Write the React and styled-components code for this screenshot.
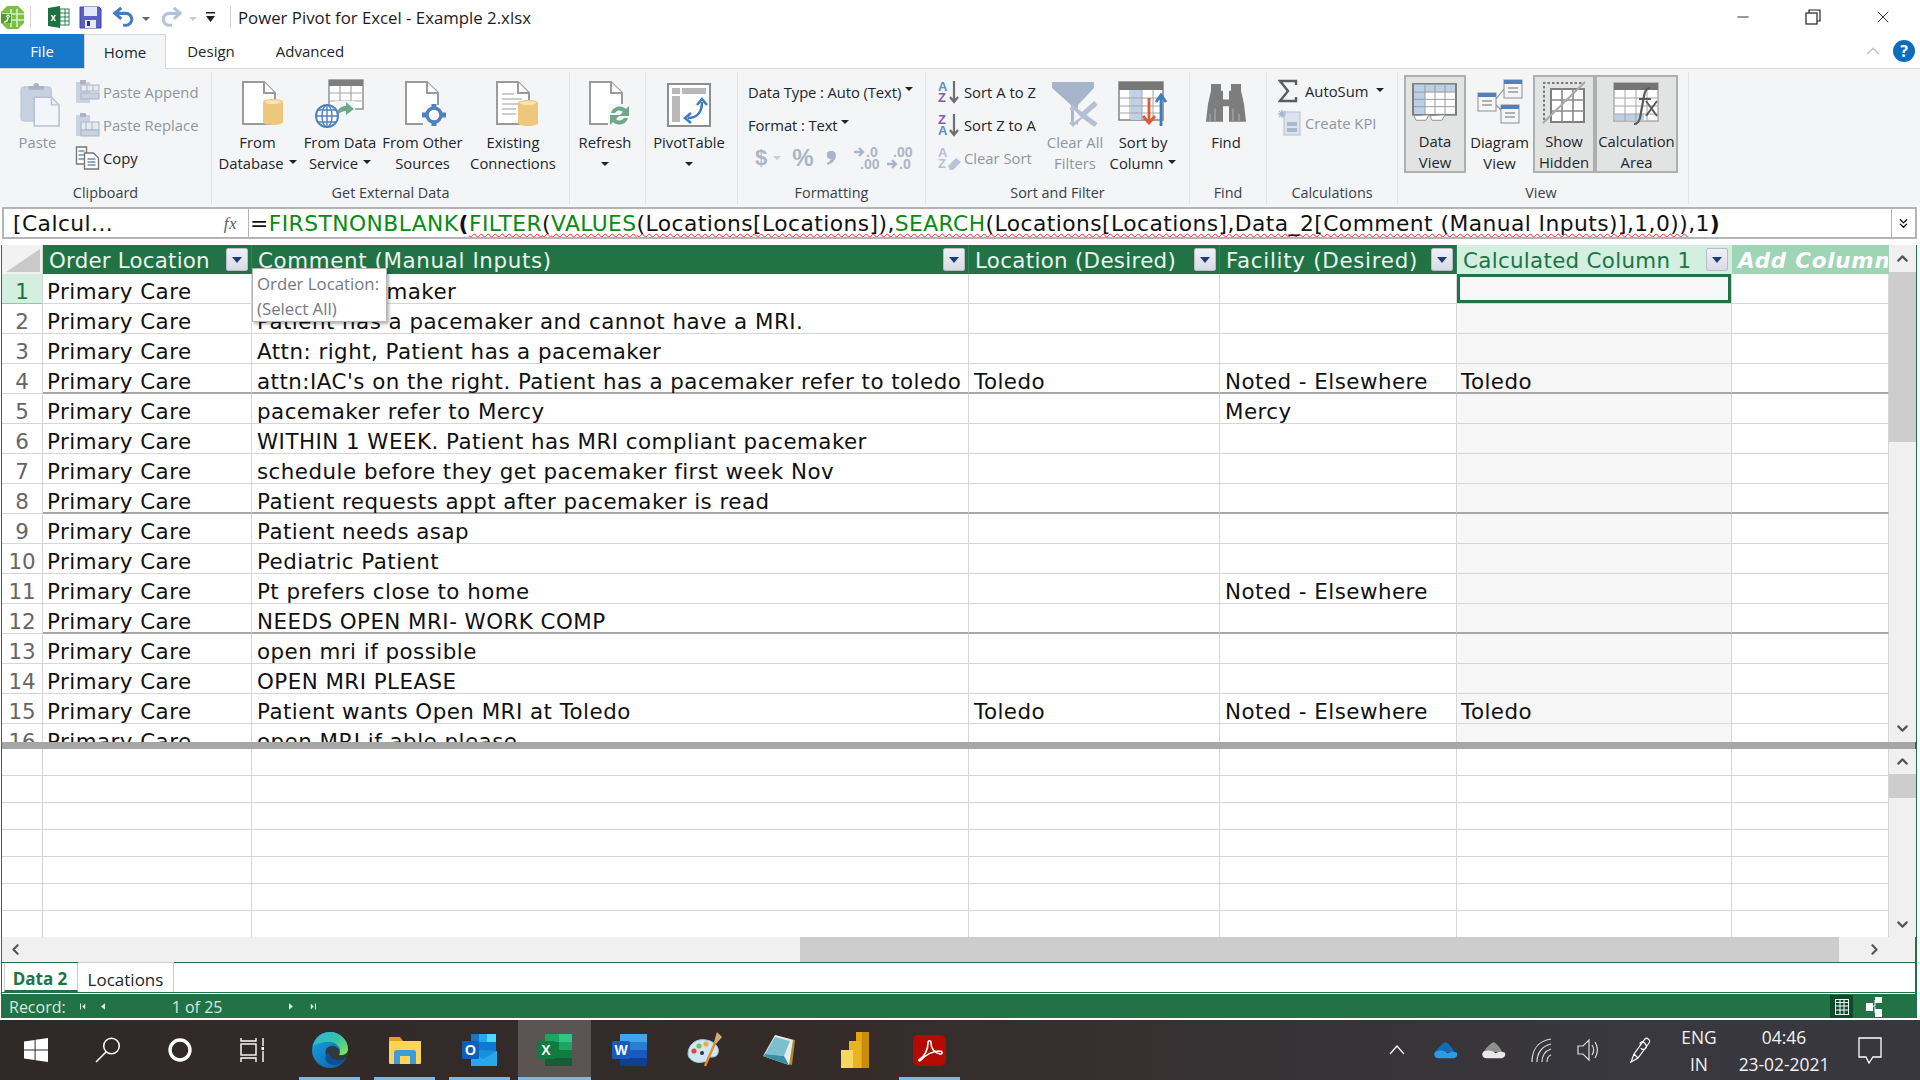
import React from 'react';
import styled, { createGlobalStyle } from 'styled-components';
import { ChevronUp, ChevronDown, ChevronLeft, ChevronRight, ChevronsDown, Minus, X } from 'lucide-react';

const UI = `"Open Sans", "Noto Sans", sans-serif`;
const GRIDFONT = `"DejaVu Sans", sans-serif`;
const GREEN = '#217346';
const COLS = '41px 209px 717px 251px 237px 275px 157px';

const Global = createGlobalStyle`
  html, body { margin: 0; padding: 0; background: #fff; overflow: hidden; }
  * { box-sizing: border-box; }
`;

const Screen = styled.div`
  width: 1920px; height: 1080px; display: flex; flex-direction: column; overflow: hidden;
  background: #fff; font-family: ${UI}; color: #22262c;
`;

/* title bar */
const TitleBar = styled.div`height: 34px; display: flex; align-items: center; position: relative;`;
const QatItem = styled.span`display: inline-flex; align-items: center; margin-left: ${p => p.$ml || 0}px; ${p => p.$flip && 'transform: scaleX(-1);'}`;
const QatSep = styled.span`width: 1px; height: 22px; background: #d5d5d5; margin-left: ${p => p.$ml}px;`;
const Title = styled.span`font-size: 16.8px; margin-left: 7px; white-space: nowrap; color: #1c1c1c;`;
const WinControls = styled.div`margin-left: auto; display: flex; align-items: center; height: 100%;`;
const WinBtn = styled.span`width: ${p => p.$w}px; display: flex; justify-content: center; color: #222;`;

/* tabs */
const TabBar = styled.div`height: 35px; display: flex; align-items: stretch; border-bottom: 1px solid #d6d6d6; background: #fff;`;
const FileTab = styled.div`width: 84px; background: #1878ca; color: #fff; font-size: 15px; display: flex; align-items: center; justify-content: center;`;
const Tab = styled.div`
  width: ${p => p.$w}px; font-size: 15px; display: flex; align-items: center; justify-content: center;
  ${p => p.$active && `background:#f4f5f7; border:1px solid #d6d6d6; border-bottom:none; margin-bottom:-1px;`}
`;
const TabRight = styled.div`margin-left: auto; display: flex; align-items: center; gap: 9px; padding-right: 5px; color: #c4c4c4;`;
const HelpDot = styled.span`
  width: 22px; height: 22px; border-radius: 50%; background: #0f6cbd; color: #fff; font-size: 16px; font-weight: 700;
  display: flex; align-items: center; justify-content: center;
`;

/* ribbon */
const Ribbon = styled.div`height: 138px; background: #f4f5f7; display: flex; align-items: flex-start; padding-top: 3px;`;
const Group = styled.div`
  width: ${p => p.$w}px; height: 132px; border-right: 1px solid #e0e2e5; display: flex; flex-direction: column; flex: none;
`;
const GroupBody = styled.div`flex: 1; min-height: 0; display: flex; padding-left: ${p => p.$pl || 0}px;`;
const GroupLabel = styled.div`height: 24px; text-align: center; font-size: 14.4px; line-height: 26px; color: #3a4048; padding-right: ${p => p.$pr || 0}px;`;
const Large = styled.div`
  width: ${p => p.$w}px; flex: none; display: flex; flex-direction: column; align-items: center; text-align: center;
  height: ${p => p.$boxed ? 98 : 104}px; margin-top: ${p => p.$boxed ? 3 : 0}px;
  color: ${p => p.$off ? '#8d95a0' : '#22262c'};
  ${p => p.$boxed && `background:#e2e3e3; border:2px solid #aeafaf;`}
`;
const LargeIcon = styled.div`
  height: ${p => p.$h || 60}px; width: 100%; display: flex; align-items: flex-end; justify-content: center; flex: none;
  padding-bottom: ${p => p.$pb ?? 5}px; padding-left: ${p => p.$dx || 0}px;
`;
const LargeLine = styled.span`display: block; font-size: 14.8px; line-height: 21px; white-space: nowrap;`;
const Caret = styled.span`
  display: inline-block; width: 0; height: 0; border-left: 4px solid transparent; border-right: 4px solid transparent;
  border-top: 4px solid ${p => p.$c || '#222'}; vertical-align: middle; margin-left: ${p => p.$ml ?? 5}px; position: relative; top: ${p => p.$t ?? -3}px;
`;
const SmallCol = styled.div`width: ${p => p.$w}px; flex: none; padding-top: 3px; display: flex; flex-direction: column;`;
const Small = styled.div`
  height: ${p => p.$h || 33}px; display: flex; align-items: center; gap: ${p => p.$gap ?? 3}px; font-size: 14.8px; white-space: nowrap;
  letter-spacing: ${p => p.$ls || 0}px;
  color: ${p => p.$off ? '#8d95a0' : '#22262c'};
`;
const NumGlyph = styled.span`
  font-family: "Liberation Sans", sans-serif; font-weight: 700; color: #a9b6c8; font-size: ${p => p.$s}px; line-height: 1;
  margin-left: ${p => p.$ml || 0}px;
`;
const CommaIcon = styled.svg`margin-left: ${p => p.$ml}px; flex: none;`;
const DecimalIcon = styled.svg`margin-left: ${p => p.$ml}px; flex: none; font-family: "Liberation Sans", sans-serif; font-weight: 700; font-size: 14px; fill: #a9b6c8;`;

/* formula */
const FormulaBar = styled.div`
  height: 32px; margin: 0 3px 6px 2px; background: #fff; display: flex; border: 2px solid #b4b4b4;
  font-family: ${GRIDFONT}; font-size: 21.8px; line-height: 30px; letter-spacing: 0.44px; color: #111; flex: none;
`;
const NameBox = styled.div`width: 245px; flex: none; padding: 1px 0 0 9px; display: flex; justify-content: space-between; align-items: center; border-right: 1px solid #b4b4b4; white-space: nowrap;`;
const Fx = styled.span`font-family: "Liberation Serif", serif; font-style: italic; color: #5d5d5d; font-size: 17px; margin-right: 11px;`;
const FormulaText = styled.div`flex: 1; padding-left: 1px; white-space: nowrap; overflow: hidden;`;
const Fn = styled.span`color: #0a8a12;`;
const Paren = styled.span`font-weight: 700;`;
const Wavy = styled.span`text-decoration: underline wavy #e0302a 1px; text-underline-offset: 2px; text-decoration-skip-ink: none;`;
const FormulaEnd = styled.div`width: 24px; flex: none; border-left: 1px solid #b4b4b4; display: flex; align-items: center; justify-content: center;`;

/* workspace */
const Workspace = styled.div`
  flex: 1; min-height: 0; margin: 0 3px 2px 1px; border-left: 1px solid ${GREEN}; border-right: 2px solid ${GREEN};
  display: flex; flex-direction: column;
`;
const Pane = styled.div`height: ${p => p.$h}px; display: flex; flex: none; position: relative;`;
const GridArea = styled.div`width: 1887px; flex: none; overflow: hidden; font-family: ${GRIDFONT}; font-size: 21.4px; color: #111;`;
const Row = styled.div`
  display: grid; grid-template-columns: ${COLS}; grid-template-rows: ${p => p.$h}px; height: ${p => p.$h}px; line-height: 35px;
`;
const Corner = styled.div`background: #f2f2f2; border-right: 1px solid #d6d6d6; display: flex; align-items: flex-end; justify-content: flex-end; padding: 0 2px 2px 0;`;
const Head = styled.div`
  display: flex; align-items: center; justify-content: space-between; padding: 3px 3px 0 6px; white-space: nowrap; overflow: hidden; line-height: 26px;
  background: ${p => p.$bg || GREEN}; color: ${p => p.$c || '#eaf5ef'}; border-right: 1px solid ${p => p.$line || '#2f8457'};
  letter-spacing: ${p => p.$ls ?? 0.3}px;
  ${p => p.$add && `font-weight:700;font-style:italic;padding-right:0;letter-spacing:0.8px;`}
`;
const FilterBtn = styled.span`
  width: 22px; height: 23px; flex: none; border: 1px solid #b8bdc9; border-radius: 2px; background: linear-gradient(#eff1f6, #d8dbe5); margin-top: -3px;
  display: flex; align-items: center; justify-content: center;
  &::after { content: ""; border-left: 5px solid transparent; border-right: 5px solid transparent; border-top: 6px solid #1f3b7a; }
`;
const RowNum = styled.div`
  text-align: center; color: ${p => p.$sel ? GREEN : '#666'}; border-right: 1px solid #d6d6d6;
  background: ${p => p.$sel ? '#d3efe0' : '#fff'}; border-bottom: 1px solid ${p => p.$sel ? '#7fcfa4' : '#d6d6d6'};
`;
const Cell = styled.div`
  padding-left: ${p => p.$pl ?? 5}px; white-space: nowrap; border-right: 1px solid #d6d6d6; letter-spacing: 0.47px;
  border-bottom: ${p => p.$edge ? '2px solid #a8a8a8' : '1px solid #d6d6d6'};
  background: ${p => p.$calc ? '#f7f7f7' : '#fff'};
  ${p => p.$selected && `box-shadow: inset 0 0 0 3px ${GREEN}; background:#f8f8f8;`}
`;
const VScroll = styled.div`width: 27px; flex: none; background: #f0f0f0; display: flex; flex-direction: column; align-items: stretch; color: #555;`;
const Arrow = styled.div`height: ${p => p.$h}px; display: flex; align-items: center; justify-content: center; ${p => p.$end && 'margin-top:auto;'}`;
const Thumb = styled.div`height: ${p => p.$h}px; background: #cdcdcd; flex: none;`;
const Tooltip = styled.div`
  position: absolute; left: 250px; top: 23px; width: 135px; height: 54px; background: #fff; border: 1px solid #b5b5b5;
  box-shadow: 2px 2px 3px rgba(0,0,0,.3); color: #76797f; font-family: ${UI}; font-size: 16.8px; line-height: 25px; padding: 2px 0 0 4px; white-space: nowrap;
`;
const Splitter = styled.div`height: 7px; background: #a6a6a6; flex: none;`;
const HScroll = styled.div`height: 25px; background: #f0f0f0; display: flex; align-items: center; flex: none; color: #555; `;
const HArrow = styled.span`width: ${p => p.$w}px; flex: none; display: flex; justify-content: center;`;
const HThumb = styled.div`width: 1039px; height: 100%; background: #cdcdcd; flex: none; margin-left: ${p => p.$ml}px;`;
const SheetTabs = styled.div`
  height: 31px; flex: none; display: flex; border-top: 1px solid ${GREEN}; border-bottom: 1px solid ${GREEN}; padding-left: 2px; font-size: 17px; margin-bottom: 1px;
`;
const SheetTab = styled.div`
  width: ${p => p.$w}px; display: flex; align-items: center; justify-content: center; background: #fff; padding-top: 4px;
  ${p => p.$active ? `color:${GREEN};font-weight:700;border-bottom:2px solid ${GREEN};border-left:1px solid #cfcfcf;border-right:1px solid #cfcfcf;padding-right:2px;` : `border-right:1px solid #cfcfcf;margin-top:-1px;border-top:1px solid #cfcfcf;`}
`;
const StatusBar = styled.div`height: 24px; flex: none; background: ${GREEN}; color: #d8e8df; font-size: 16px; display: flex; align-items: center; padding: 1px 0 0 7px; white-space: nowrap;`;
const StatusIcons = styled.div`margin-left: auto; display: flex; align-items: center; height: 100%; padding-right: 19px;`;
const StatusView = styled.span`
  width: ${p => p.$w}px; height: 100%; display: flex; align-items: center; justify-content: center;
  ${p => p.$on && 'background:#0e4a29;'}
`;
const NavGlyph = styled.span`display: inline-flex; margin-left: ${p => p.$ml}px; opacity: .85;`;
const RecordText = styled.span`margin-left: ${p => p.$ml}px;`;

/* taskbar */
const Taskbar = styled.div`
  height: 60px; flex: none; background: linear-gradient(90deg, #2f2927 0%, #352c2a 45%, #38383e 85%, #37373d 100%); display: flex; align-items: center; color: #fff;
`;
const SysSlot = styled.span`width: 72px; height: 60px; flex: none; display: flex; align-items: center; justify-content: center;`;
const Apps = styled.div`display: flex; gap: 14px; margin-left: 11px; height: 100%;`;
const AppCell = styled.span`
  width: ${p => p.$active ? 73 : 61}px; height: 60px; display: flex; align-items: center; justify-content: center; position: relative;
  ${p => p.$active && 'margin: 0 -6px; background:#5a5452;'}
  ${p => p.$open && `&::after { content:""; position:absolute; left:0; right:0; bottom:0; height:3px; background:#76b9ed; }`}
`;
const Tray = styled.div`margin-left: auto; display: flex; align-items: center; height: 100%;`;
const TrayIcon = styled.span`width: ${p => p.$w}px; display: flex; justify-content: center; flex: none;`;
const TrayText = styled.div`
  width: ${p => p.$w}px; text-align: center; flex: none; font-size: 17.4px; line-height: 27px; padding-top: 2px; color: #f2f2f2; white-space: nowrap;
`;

/* ---- icons ---- */
const Page = ({ lines }) => (
  <>
    <path d="M1 1H22L33 12V43H1Z" fill="#fff" stroke="#9a9a9a" strokeWidth="2" />
    <path d="M22 1V12H33" fill="#fff" stroke="#9a9a9a" strokeWidth="2" />
    {lines && <path d="M6 13H18M6 18H26M6 23H26M6 28H20M6 33H20" stroke="#bdbdbd" strokeWidth="1.6" />}
  </>
);
const Cyl = ({ x, y }) => (
  <g transform={`translate(${x} ${y})`}>
    <path d="M0 4C0 0 20 0 20 4V24C20 28 0 28 0 24Z" fill="#edc77c" />
    <ellipse cx="10" cy="4" rx="8" ry="2" fill="#f7e3b7" />
  </g>
);
const IcoFromDb = () => <svg width="42" height="46" viewBox="0 0 42 46"><Page /><Cyl x={21} y={17} /></svg>;
const IcoService = () => (
  <svg width="50" height="50" viewBox="0 0 50 50">
    <rect x="14" y="1" width="34" height="29" fill="#fff" stroke="#8c8c8c" strokeWidth="1.4" />
    <rect x="14" y="1" width="34" height="6" fill="#7e7e7e" />
    <path d="M25 7V30M36 7V30M14 14H48M14 22H48" stroke="#a8a8a8" strokeWidth="1.2" />
    <rect x="20" y="22" width="20" height="16" fill="#f4f5f7" />
    <path d="M23 36c0-7 5-9 9-9v-4l8 7-8 6v-4c-3 0-6 1-9 4z" fill="#6fa789" transform="translate(-1 0)" />
    <circle cx="12" cy="37" r="11" fill="#fff" stroke="#4f81bd" strokeWidth="2" />
    <ellipse cx="12" cy="37" rx="5" ry="11" fill="none" stroke="#4f81bd" strokeWidth="1.4" />
    <path d="M1 37H23M3 31H21M3 43H21M12 26V48" stroke="#4f81bd" strokeWidth="1.4" />
  </svg>
);
const IcoOther = () => (
  <svg width="44" height="46" viewBox="0 0 44 46">
    <Page />
    <rect x="18" y="24" width="26" height="22" fill="#f4f5f7" />
    <path d="M18 34H42M30 23V45" stroke="#4f81bd" strokeWidth="5" transform="translate(-1 0)" />
    <circle cx="29" cy="34" r="7" fill="#fff" stroke="#4f81bd" strokeWidth="3.5" />
  </svg>
);
const IcoExisting = () => <svg width="42" height="46" viewBox="0 0 42 46"><Page lines /><Cyl x={22} y={18} /></svg>;
const IcoRefresh = () => (
  <svg width="42" height="46" viewBox="0 0 42 46">
    <Page />
    <rect x="19" y="23" width="23" height="23" fill="#f4f5f7" />
    <path d="M22 32a9 9 0 0 1 15-4l3-3v10H30l4-4a5 5 0 0 0-8 1zM39 37a9 9 0 0 1-15 4l-3 3V34h10l-4 4a5 5 0 0 0 8-1z" fill="#6fa789" />
  </svg>
);
const IcoPivot = () => (
  <svg width="44" height="44" viewBox="0 0 44 44">
    <rect x="1" y="1" width="42" height="42" fill="#fff" stroke="#8f8f8f" strokeWidth="2" />
    <rect x="5" y="5" width="8" height="6" fill="#b9b9b9" /><rect x="15" y="5" width="24" height="6" fill="#b9b9b9" />
    <rect x="5" y="13" width="8" height="26" fill="#b9b9b9" />
    <path d="M21 35c9 0 14-6 14-16" fill="none" stroke="#3f7cbf" strokeWidth="2.6" />
    <path d="M30 22l5-6 5 6M24 30l-6 5 6 5" fill="none" stroke="#3f7cbf" strokeWidth="2.6" />
  </svg>
);
const IcoPaste = () => (
  <svg width="40" height="46" viewBox="0 0 42 48">
    <rect x="1" y="6" width="32" height="36" rx="3" fill="#c5d0e0" stroke="#b9c4d4" />
    <path d="M9 9V5h5a3 3 0 0 1 6 0h5v4z" fill="#a8b2c2" />
    <path d="M15 17H33L41 25V47H15Z" fill="#f2f5fa" stroke="#b6c2d6" strokeWidth="1.6" />
    <path d="M33 17V25H41" fill="none" stroke="#b6c2d6" strokeWidth="1.4" />
  </svg>
);
const IcoPasteSmall = ({ v }) => (
  <svg width="25" height="24" viewBox="0 0 25 24">
    <rect x="1" y="2" width="14" height="21" fill="#c8d2e1" />
    <rect x="5" y="0" width="6" height="4" fill="#aab4c4" />
    <rect x="6" y={v ? 9 : 5} width="18" height={v ? 8 : 6} fill="#e6eaf1" stroke="#aab4c4" />
    <path d={v ? 'M11 9v8M17 9v8' : 'M12 5v6M18 5v6'} stroke="#aab4c4" />
    <rect x="6" y={v ? 17 : 13} width="18" height="6" fill="#c8d2e1" stroke="#aab4c4" />
  </svg>
);
const IcoCopy = () => (
  <svg width="25" height="24" viewBox="0 0 24 24">
    <path d="M1 1H11V18H1Z" fill="#fff" stroke="#777" strokeWidth="1.4" />
    <path d="M3 5H9M3 9H9M3 13H9" stroke="#6d8fb8" strokeWidth="1.4" />
    <path d="M9 7H18L23 12V23H9Z" fill="#fff" stroke="#777" strokeWidth="1.4" />
    <path d="M12 13H20M12 16H20M12 19H20" stroke="#6d8fb8" strokeWidth="1.4" />
  </svg>
);
const LetterIcon = ({ top, bottom, topC, botC, arrow = '#6f6f6f', erase }) => (
  <svg width="23" height="26" viewBox="0 0 23 26" fontFamily="Liberation Sans, sans-serif" fontWeight="700" fontSize="13">
    <text x="0" y="12" fill={topC}>{top}</text>
    <text x="0" y="23" fill={botC}>{bottom}</text>
    {erase ? <path d="M10 21l8-8 5 4-8 8h-3z" fill="#b9c4d4" /> : <path d="M16 2V22M12 18l4 5 4-5" fill="none" stroke={arrow} strokeWidth="2.2" />}
  </svg>
);
const IcoClearFilter = () => (
  <svg width="48" height="46" viewBox="0 0 48 46">
    <path d="M1 1H43V7L27 24V44L20 40V24L1 7Z" fill="#a7b5cc" />
    <path d="M20 26L45 44M20 44L45 22" stroke="#b3bfd2" strokeWidth="5" />
    <path d="M23 29L30 36L23 41Z" fill="#f4f5f7" />
  </svg>
);
const IcoSortCol = () => (
  <svg width="50" height="46" viewBox="0 0 50 46">
    <rect x="1" y="1" width="44" height="38" fill="#fff" stroke="#8a8a8a" strokeWidth="1.6" />
    <rect x="1" y="1" width="44" height="8" fill="#777" />
    <rect x="13" y="9" width="11" height="30" fill="#bdd2e8" />
    <path d="M12 9V39M24 9V39M35 9V39M1 17H45M1 25H45M1 32H45" stroke="#a5a5a5" />
    <path d="M31 17V42M25 35l6 7 6-7" fill="none" stroke="#dc5c36" strokeWidth="2.8" />
    <path d="M43 45V15M38 21l5-7 5 7" fill="none" stroke="#3f7cbf" strokeWidth="2.8" />
  </svg>
);
const IcoFind = () => (
  <svg width="40" height="40" viewBox="0 0 40 36" preserveAspectRatio="none">
    <path d="M5 0H15V6H17V14H23V6H25V0H35V6L38 18L40 34H23V20H17V34H0L2 18L5 6Z" fill="#7d7d7d" />
    <path d="M4 27V33M9 22V33M27 22V33M33 27V33" stroke="#a4a4a4" strokeWidth="1.4" />
  </svg>
);
const IcoSigma = () => (
  <svg width="20" height="24" viewBox="0 0 20 24"><path d="M18 6V2H2L10 12L2 22H18V18" fill="none" stroke="#5c5c5c" strokeWidth="2.4" /></svg>
);
const IcoKpi = () => (
  <svg width="24" height="26" viewBox="0 0 24 26">
    <rect x="6" y="2" width="16" height="23" fill="#dbe3ee" stroke="#b3c1d4" />
    <rect x="9" y="12" width="10" height="4" fill="#a9b9cd" /><rect x="9" y="18" width="10" height="4" fill="#a9b9cd" />
    <path d="M4 0v8M0 4h8M1 1l6 6M7 1L1 7" stroke="#a9b9cd" strokeWidth="1.4" />
  </svg>
);
const IcoDataView = () => (
  <svg width="46" height="40" viewBox="0 0 46 44" preserveAspectRatio="none">
    <rect x="1" y="1" width="43" height="34" fill="#fff" stroke="#7f7f7f" strokeWidth="2" />
    <rect x="2" y="2" width="41" height="8" fill="#bad0e7" /><rect x="2" y="2" width="11" height="32" fill="#bad0e7" />
    <path d="M13 2V34M23 2V34M33 2V34M2 10H43M2 18H43M2 26H43" stroke="#9a9a9a" />
    <path d="M2 36l2 5h10l3-6zM18 36l2 5h10l3-6z" fill="#fff" stroke="#8f8f8f" />
  </svg>
);
const MiniTable = ({ x, y }) => (
  <g transform={`translate(${x} ${y})`}>
    <rect x="0" y="0" width="18" height="18" fill="#f4f5f7" stroke="#8f8f8f" />
    <rect x="0" y="0" width="18" height="4" fill="#4f81bd" />
    <path d="M4 8H14M4 12H14" stroke="#9a9a9a" strokeWidth="1.4" />
  </g>
);
const IcoDiagram = () => (
  <svg width="46" height="46" viewBox="0 0 46 46">
    <path d="M19 20L27 10M19 26L27 34" stroke="#8f8f8f" strokeWidth="1.2" />
    <MiniTable x={1} y={14} /><MiniTable x={27} y={1} /><MiniTable x={24} y={26} />
  </svg>
);
const IcoHidden = () => (
  <svg width="44" height="44" viewBox="0 0 44 44">
    <rect x="9" y="9" width="33" height="33" fill="#fff" stroke="#7f7f7f" strokeWidth="2" />
    <path d="M20 9V42M31 9V42M9 20H42M9 31H42" stroke="#8a8a8a" strokeWidth="1.6" />
    <path d="M2 40V3H42" fill="none" stroke="#7a7a7a" strokeWidth="2" strokeDasharray="2.5 2" />
    <path d="M1 43L43 2" stroke="#a9a9a9" strokeWidth="2" />
  </svg>
);
const IcoCalcArea = () => (
  <svg width="48" height="46" viewBox="0 0 48 46">
    <rect x="1" y="1" width="44" height="38" fill="#fff" stroke="#8a8a8a" />
    <rect x="1" y="1" width="44" height="7" fill="#747474" />
    <rect x="2" y="32" width="29" height="6" fill="#bad0e7" />
    <path d="M12 8V39M23 8V39M34 8V39M1 16H45M1 24H45M1 32H45" stroke="#a5a5a5" />
    <path d="M37 6c-4 0-5 3-6 8l-4 22c-1 4-3 6-6 6" fill="none" stroke="#5a5a5a" strokeWidth="2.2" />
    <path d="M26 17H38M33 19l11 15M44 19L33 34" stroke="#5a5a5a" strokeWidth="2" />
  </svg>
);
const IcoPowerPivot = () => (
  <svg width="25" height="25" viewBox="0 0 25 25">
    <path d="M7 1H18L24 7V18L18 24H7L1 18V7Z" fill="#7bc043" />
    <path d="M11 4V22M17 4V22M2 9H24M2 15H24" stroke="#d9f0c0" strokeWidth="1.6" />
    <rect x="1" y="9" width="10" height="9" fill="#4d9e32" />
    <path d="M4 17c3 0 4-2 4-5M6 12l2-2 2 2" fill="none" stroke="#fff" strokeWidth="1.4" />
  </svg>
);
const IcoXlSmall = () => (
  <svg width="22" height="22" viewBox="0 0 22 22" fontFamily="Liberation Sans, sans-serif">
    <rect x="7" y="3" width="14" height="16" fill="#fff" stroke="#2f7d4f" />
    <path d="M12 3V19M17 3V19M7 7H21M7 11H21M7 15H21" stroke="#2f7d4f" />
    <path d="M0 2L12 0V22L0 20Z" fill="#1e6f42" />
    <text x="2.5" y="15" fontSize="10" fontWeight="700" fill="#fff">x</text>
  </svg>
);
const IcoSave = () => (
  <svg width="23" height="23" viewBox="0 0 23 23">
    <path d="M1 1H20L22 3V22H1Z" fill="#5b5fc7" stroke="#3f44a5" />
    <rect x="5" y="1" width="13" height="9" fill="#e5e8f7" />
    <rect x="6" y="14" width="11" height="8" fill="#e8eaf5" /><rect x="8" y="15" width="3" height="5" fill="#2b2f85" />
  </svg>
);
const IcoUndo = ({ c }) => (
  <svg width="22" height="24" viewBox="0 0 24 24">
    <path d="M4 8H14a6 6 0 0 1 0 13H11" fill="none" stroke={c} strokeWidth="3.4" />
    <path d="M9 2L2 8l7 6" fill="none" stroke={c} strokeWidth="3.4" />
  </svg>
);
const IcoCustomize = () => (
  <svg width="9" height="10" viewBox="0 0 9 10"><path d="M0 0H9V1.4H0ZM0 4H9L4.5 10Z" fill="#222" /></svg>
);
const IcoSkip = ({ r }) => (
  <svg width="6" height="7" viewBox="0 0 8 8"><g transform={r ? 'translate(8 0) scale(-1 1)' : undefined}><path d="M0 0H1.4V8H0ZM7 0V8L3 4Z" fill="#fff" /></g></svg>
);
const IcoStep = ({ r }) => (
  <svg width="4" height="7" viewBox="0 0 5 8"><path d={r ? 'M0 0V8L5 4Z' : 'M5 0V8L0 4Z'} fill="#fff" /></svg>
);
const IcoStatusGrid = () => (
  <svg width="14" height="16" viewBox="0 0 14 16"><rect x=".5" y=".5" width="13" height="15" fill="none" stroke="#fff" /><path d="M.5 3.5H13.5M.5 7H13.5M.5 11H13.5M5 .5V15.5M9 .5V15.5" stroke="#fff" /></svg>
);
const IcoStatusDiagram = () => (
  <svg width="17" height="20" viewBox="0 0 17 20" fill="#fff"><rect x="0" y="6" width="7" height="8" /><rect x="9" y="0" width="7" height="6" /><rect x="9" y="12" width="7" height="8" /><path d="M7 9h2V3h1M9 10v6h1" stroke="#fff" fill="none" /></svg>
);

/* taskbar icons */
const TbWin = () => <svg width="24" height="24" viewBox="0 0 24 24" fill="#fff"><path d="M0 3.4L10.6 2V11.4H0ZM11.6 1.8L24 0V11.4H11.6ZM0 12.5H10.6V22L0 20.6ZM11.6 12.5H24V24L11.6 22.2Z" /></svg>;
const TbSearch = () => <svg width="26" height="26" viewBox="0 0 26 26"><circle cx="16.5" cy="9" r="7.8" fill="none" stroke="#fff" strokeWidth="1.5" /><path d="M11 15L1 25" stroke="#fff" strokeWidth="1.6" /></svg>;
const TbCortana = () => <svg width="24" height="24" viewBox="0 0 24 24"><circle cx="12" cy="12" r="10" fill="none" stroke="#fff" strokeWidth="3.4" /></svg>;
const TbTaskView = () => (
  <svg width="24" height="24" viewBox="0 0 24 24" fill="none" stroke="#fff" strokeWidth="1.4">
    <path d="M1 0V3H16V0M1 24V20H16V24" /><rect x="1" y="6" width="15" height="11" /><path d="M23 0V8M23 13V24" /><rect x="21.5" y="9" width="3" height="3" fill="#fff" stroke="none" />
  </svg>
);
const TbEdge = () => (
  <svg width="36" height="36" viewBox="0 0 36 36">
    <defs>
      <linearGradient id="eg1" x1="0" y1="0" x2="1" y2="0.8"><stop offset="0" stopColor="#2bb9d9" /><stop offset="0.55" stopColor="#35c1a9" /><stop offset="1" stopColor="#7de05e" /></linearGradient>
      <linearGradient id="eg2" x1="0" y1="0" x2="1" y2="1"><stop offset="0" stopColor="#1ba7e8" /><stop offset="1" stopColor="#0c59a4" /></linearGradient>
    </defs>
    <circle cx="18" cy="18" r="18" fill="url(#eg2)" />
    <path d="M1 14C3 5 10 0 18 0C28 0 36 8 36 17C36 22 32 24 27 23C31 16 24 10 17 10C10 10 4 12 1 14Z" fill="url(#eg1)" />
    <path d="M27 23C29 18 24 13 19 14C14 15 12 20 15 25C18 30 26 32 33 27C36 24 36 22 36 19C34 23 30 24 27 23Z" fill="#2f3a3e" />
    <path d="M17 21C18 27 27 31 34 26C30 33 22 35 16 31C12 28 13 22 17 21Z" fill="#0f4f96" />
  </svg>
);
const TbExplorer = () => (
  <svg width="32" height="27" viewBox="0 0 32 27">
    <path d="M0 1C0 0 1 0 1 0H11L14 4H32V26H0Z" fill="#e5a40e" />
    <rect x="0" y="4" width="32" height="23" rx="1" fill="#fcd558" />
    <path d="M5 27V16C5 14 6 13 8 13H24C26 13 27 14 27 16V27H21V19H11V27Z" fill="#3f9adb" />
    <rect x="11" y="19" width="10" height="8" fill="#fdd55c" />
  </svg>
);
const TbOutlook = () => (
  <svg width="35" height="32" viewBox="0 0 35 32" fontFamily="Liberation Sans, sans-serif">
    <rect x="9" y="0" width="25" height="17" fill="#0f78d4" /><rect x="17" y="0" width="8" height="8" fill="#28a8ea" /><rect x="25" y="0" width="9" height="8" fill="#50d9ff" />
    <path d="M9 15L35 17V32H9Z" fill="#1490df" /><path d="M9 17L21 25L35 17V32H9Z" fill="#28a8ea" />
    <rect x="0" y="7" width="17" height="18" rx="1.5" fill="#0a5fb8" />
    <text x="8.5" y="21" fontSize="14" fontWeight="700" fill="#fff" textAnchor="middle">O</text>
  </svg>
);
const TbExcel = () => (
  <svg width="35" height="32" viewBox="0 0 35 32" fontFamily="Liberation Sans, sans-serif">
    <rect x="8" y="0" width="27" height="32" rx="1.5" fill="#107c41" /><rect x="8" y="0" width="14" height="8" fill="#21a366" /><rect x="22" y="0" width="13" height="8" fill="#33c481" /><rect x="22" y="8" width="13" height="8" fill="#21a366" />
    <rect x="8" y="24" width="27" height="8" fill="#185c37" />
    <rect x="0" y="7" width="18" height="18" rx="1.5" fill="#107c41" />
    <text x="9" y="21" fontSize="14" fontWeight="700" fill="#fff" textAnchor="middle">X</text>
  </svg>
);
const TbWord = () => (
  <svg width="35" height="32" viewBox="0 0 35 32" fontFamily="Liberation Sans, sans-serif">
    <rect x="8" y="0" width="27" height="32" rx="1.5" fill="#2b7cd3" /><rect x="8" y="0" width="27" height="8" fill="#41a5ee" /><rect x="8" y="16" width="27" height="8" fill="#185abd" /><rect x="8" y="24" width="27" height="8" fill="#103f91" />
    <rect x="0" y="7" width="18" height="18" rx="1.5" fill="#185abd" />
    <text x="9" y="21" fontSize="14" fontWeight="700" fill="#fff" textAnchor="middle">W</text>
  </svg>
);
const TbPaint = () => (
  <svg width="36" height="36" viewBox="0 0 36 36">
    <path d="M1 22C1 12 10 6 19 8C27 9 33 15 31 21C30 26 24 25 21 25C19 27 21 30 16 30C10 32 1 28 1 22Z" fill="#cfe6f3" stroke="#9cc4da" />
    <circle cx="7" cy="19" r="2.6" fill="#e0483e" /><circle cx="12" cy="14" r="2.6" fill="#7cc04a" /><circle cx="19" cy="12" r="2.6" fill="#f2a93b" /><circle cx="15" cy="21" r="2" fill="#333" />
    <path d="M18 34L28 11" stroke="#e78c22" strokeWidth="2.4" />
    <path d="M27 10L30 0L35 5L29 12Z" fill="#d3ab7a" />
  </svg>
);
const TbNote = () => (
  <svg width="34" height="32" viewBox="0 0 34 32">
    <path d="M12 1L32 6L29 31L24 30Z" fill="#b08a2b" />
    <path d="M12 1L30 6L26 31L0 22Z" fill="#e5edf0" />
    <path d="M12 3L27 7L21 22L2 20Z" fill="#7cc0cf" />
    <path d="M2 20L21 22L26 31L0 22Z" fill="#3a8ea3" />
  </svg>
);
const TbPbi = () => (
  <svg width="28" height="36" viewBox="0 0 28 36">
    <rect x="15" y="0" width="13" height="36" fill="#c98c0a" /><rect x="15" y="0" width="6" height="36" fill="#e5a40e" />
    <rect x="8" y="9" width="12" height="27" fill="#e8b521" /><rect x="0" y="18" width="12" height="18" fill="#f5d860" />
  </svg>
);
const TbAcrobat = () => (
  <svg width="33" height="31" viewBox="0 0 33 31">
    <rect x="0" y="0" width="33" height="31" rx="5" fill="#b30b00" />
    <path d="M7 24C12 21 15 14 15 8C15 5 18 5 18 8C18 14 22 18 27 19C30 19 30 16 26 16C20 16 12 20 8 25C6 27 5 25 7 24Z" fill="none" stroke="#fff" strokeWidth="1.6" />
  </svg>
);
const TrayChevron = () => <svg width="16" height="10" viewBox="0 0 16 10"><path d="M1 9L8 1L15 9" fill="none" stroke="#fff" strokeWidth="1.2" /></svg>;
const TrayCloud = ({ a, b }) => (
  <svg width="25" height="17" viewBox="0 0 26 24" preserveAspectRatio="none"><path d="M13 0C17 3 20 8 22 14H3C5 8 9 3 13 0Z" fill={a} /><path d="M3 13C8 11 12 12 15 16C18 13 22 13 25 15C26 19 24 23 20 23H6C1 23 0 16 3 13Z" fill={b} /></svg>
);
const TrayNet = () => <svg width="22" height="24" viewBox="0 0 22 24" fill="none" stroke="#ddd" strokeWidth="1.2"><path d="M2 24C2 12 8 3 21 1M7 24C7 15 12 8 21 6M12 24C12 18 15 13 21 11M17 24C17 21 18 18 21 17" /></svg>;
const TraySound = () => <svg width="24" height="24" viewBox="0 0 24 24" fill="none" stroke="#ddd" strokeWidth="1.2"><path d="M1 8H6L12 2V22L6 16H1ZM15 7C17 10 17 14 15 17M18 4C21 9 21 15 18 20" /></svg>;
const TrayPen = () => <svg width="24" height="26" viewBox="0 0 24 26" fill="none" stroke="#fff" strokeWidth="1.2"><path d="M2 25L5 17L16 2C18 0 22 3 20 6L9 21ZM5 17L9 21M12 8C9 6 14 2 17 8C19 12 13 14 12 11" /></svg>;
const TrayNotify = () => <svg width="26" height="28" viewBox="0 0 26 28" fill="none" stroke="#fff" strokeWidth="1.3"><path d="M2 2H24V21H16L12 27L9 21H2Z" /></svg>;

const rows = [
  ['Pt has pacemaker', '', '', ''],
  ['Patient has a pacemaker and cannot have a MRI.', '', '', ''],
  ['Attn: right, Patient has a pacemaker', '', '', ''],
  ["attn:IAC's on the right. Patient has a pacemaker refer to toledo", 'Toledo', 'Noted - Elsewhere', 'Toledo'],
  ['pacemaker refer to Mercy', '', 'Mercy', ''],
  ['WITHIN 1 WEEK. Patient has MRI compliant pacemaker', '', '', ''],
  ['schedule before they get pacemaker first week Nov', '', '', ''],
  ['Patient requests appt after pacemaker is read', '', '', ''],
  ['Patient needs asap', '', '', ''],
  ['Pediatric Patient', '', '', ''],
  ['Pt prefers close to home', '', 'Noted - Elsewhere', ''],
  ['NEEDS OPEN MRI- WORK COMP', '', '', ''],
  ['open mri if possible', '', '', ''],
  ['OPEN MRI PLEASE', '', '', ''],
  ['Patient wants Open MRI at Toledo', 'Toledo', 'Noted - Elsewhere', 'Toledo'],
  ['open MRI if able please', '', '', ''],
];
const edges = new Set([4, 8, 12]);

export default function App() {
  return (
    <Screen>
      <Global />
      <TitleBar>
        <QatItem><IcoPowerPivot /></QatItem>
        <QatSep $ml={5} />
        <QatItem $ml={17}><IcoXlSmall /></QatItem>
        <QatItem $ml={9}><IcoSave /></QatItem>
        <QatItem $ml={11}><IcoUndo c="#3e7fc1" /></QatItem>
        <Caret $c="#666" $ml={7} $t={2} />
        <QatItem $ml={10} $flip><IcoUndo c="#b0c4dc" /></QatItem>
        <Caret $c="#ccc" $ml={7} $t={2} />
        <QatItem $ml={9}><IcoCustomize /></QatItem>
        <QatSep $ml={15} />
        <Title>Power Pivot for Excel - Example 2.xlsx</Title>
        <WinControls>
          <WinBtn $w={74}><Minus size={18} strokeWidth={1.2} /></WinBtn>
          <WinBtn $w={66}>
            <svg width="16" height="16" viewBox="0 0 16 16" fill="none" stroke="#222" strokeWidth="1.2"><rect x="1" y="4" width="11" height="11" /><path d="M4 4V1H15V12H12" /></svg>
          </WinBtn>
          <WinBtn $w={74}><X size={20} strokeWidth={1.1} /></WinBtn>
        </WinControls>
      </TitleBar>

      <TabBar>
        <FileTab>File</FileTab>
        <Tab $w={82} $active>Home</Tab>
        <Tab $w={90}>Design</Tab>
        <Tab $w={108}>Advanced</Tab>
        <TabRight>
          <ChevronUp size={22} strokeWidth={1.6} />
          <HelpDot>?</HelpDot>
        </TabRight>
      </TabBar>

      <Ribbon>
        <Group $w={212}>
          <GroupBody>
            <Large $w={75} $off><LargeIcon $dx={4}><IcoPaste /></LargeIcon><LargeLine>Paste</LargeLine></Large>
            <SmallCol $w={130}>
              <Small $off><IcoPasteSmall /><span>Paste Append</span></Small>
              <Small $off><IcoPasteSmall v /><span>Paste Replace</span></Small>
              <Small><IcoCopy /><span>Copy</span></Small>
            </SmallCol>
          </GroupBody>
          <GroupLabel>Clipboard</GroupLabel>
        </Group>

        <Group $w={358}>
          <GroupBody $pl={3}>
            <Large $w={85}><LargeIcon $dx={10}><IcoFromDb /></LargeIcon><LargeLine>From</LargeLine><LargeLine>Database<Caret /></LargeLine></Large>
            <Large $w={80}><LargeIcon $pb={3}><IcoService /></LargeIcon><LargeLine>From Data</LargeLine><LargeLine>Service<Caret /></LargeLine></Large>
            <Large $w={85}><LargeIcon $dx={9}><IcoOther /></LargeIcon><LargeLine>From Other</LargeLine><LargeLine>Sources</LargeLine></Large>
            <Large $w={96}><LargeIcon $dx={8}><IcoExisting /></LargeIcon><LargeLine>Existing</LargeLine><LargeLine>Connections</LargeLine></Large>
          </GroupBody>
          <GroupLabel>Get External Data</GroupLabel>
        </Group>

        <Group $w={76}>
          <GroupBody>
            <Large $w={70}><LargeIcon $dx={9}><IcoRefresh /></LargeIcon><LargeLine>Refresh</LargeLine><LargeLine><Caret $ml={0} $t={-1} /></LargeLine></Large>
          </GroupBody>
        </Group>
        <Group $w={92}>
          <GroupBody>
            <Large $w={86}><LargeIcon><IcoPivot /></LargeIcon><LargeLine>PivotTable</LargeLine><LargeLine><Caret $ml={0} $t={-1} /></LargeLine></Large>
          </GroupBody>
        </Group>

        <Group $w={188}>
          <GroupBody $pl={10}>
            <SmallCol $w={176}>
              <Small $ls={-0.1}>Data Type : Auto (Text)<Caret $ml={1} /></Small>
              <Small $ls={-0.1}>Format : Text<Caret $ml={0} /></Small>
              <Small $gap={0}>
                <NumGlyph $s={22} $ml={7}>$</NumGlyph>
                <Caret $c="#c8ccd2" $ml={6} $t={0} />
                <NumGlyph $s={24} $ml={11}>%</NumGlyph>
                <CommaIcon $ml={12} width="11" height="14" viewBox="0 0 11 14">
                  <path d="M4 0a4.6 4.6 0 0 1 6 4.5c0 4-3.5 8-8.5 9.5L.8 12c2.2-1 3.6-2.4 4-4C2 8 .8 6.4.8 4.5A4 4 0 0 1 4 0Z" fill="#a9b6c8" />
                </CommaIcon>
                <DecimalIcon $ml={17} width="28" height="28" viewBox="0 0 28 28">
                  <path d="M0 8H8M5 4l4 4-4 4" stroke="#a9b6c8" strokeWidth="2.4" fill="none" /><text x="12" y="13">.0</text><text x="6" y="25">.00</text>
                </DecimalIcon>
                <DecimalIcon $ml={5} width="28" height="28" viewBox="0 0 28 28">
                  <text x="6" y="13">.00</text><path d="M0 20H8M5 16l4 4-4 4" stroke="#a9b6c8" strokeWidth="2.4" fill="none" /><text x="12" y="25">.0</text>
                </DecimalIcon>
              </Small>
            </SmallCol>
          </GroupBody>
          <GroupLabel>Formatting</GroupLabel>
        </Group>

        <Group $w={264}>
          <GroupBody $pl={12}>
            <SmallCol $w={107}>
              <Small><LetterIcon top="A" bottom="Z" topC="#5b8fc7" botC="#8a5ca8" /><span>Sort A to Z</span></Small>
              <Small><LetterIcon top="Z" bottom="A" topC="#8a5ca8" botC="#5b8fc7" /><span>Sort Z to A</span></Small>
              <Small $off><LetterIcon top="A" bottom="Z" topC="#b3bfd2" botC="#b3bfd2" erase /><span>Clear Sort</span></Small>
            </SmallCol>
            <Large $w={60} $off><LargeIcon><IcoClearFilter /></LargeIcon><LargeLine>Clear All</LargeLine><LargeLine>Filters</LargeLine></Large>
            <Large $w={76}><LargeIcon><IcoSortCol /></LargeIcon><LargeLine>Sort by</LargeLine><LargeLine>Column<Caret /></LargeLine></Large>
          </GroupBody>
          <GroupLabel>Sort and Filter</GroupLabel>
        </Group>

        <Group $w={77}>
          <GroupBody>
            <Large $w={72}><LargeIcon $pb={8}><IcoFind /></LargeIcon><LargeLine>Find</LargeLine></Large>
          </GroupBody>
          <GroupLabel>Find</GroupLabel>
        </Group>

        <Group $w={131}>
          <GroupBody $pl={11}>
            <SmallCol $w={118}>
              <Small $h={32} $gap={7}><IcoSigma /><span>AutoSum<Caret $ml={7} /></span></Small>
              <Small $off $h={32}><IcoKpi /><span>Create KPI</span></Small>
            </SmallCol>
          </GroupBody>
          <GroupLabel>Calculations</GroupLabel>
        </Group>

        <Group $w={291}>
          <GroupBody $pl={6}>
            <Large $w={62} $boxed><LargeIcon $h={54} $pb={8}><IcoDataView /></LargeIcon><LargeLine>Data</LargeLine><LargeLine>View</LargeLine></Large>
            <Large $w={67}><LargeIcon $pb={7}><IcoDiagram /></LargeIcon><LargeLine>Diagram</LargeLine><LargeLine>View</LargeLine></Large>
            <Large $w={62} $boxed><LargeIcon $h={54} $pb={7}><IcoHidden /></LargeIcon><LargeLine>Show</LargeLine><LargeLine>Hidden</LargeLine></Large>
            <Large $w={83} $boxed><LargeIcon $h={54} $pb={3}><IcoCalcArea /></LargeIcon><LargeLine>Calculation</LargeLine><LargeLine>Area</LargeLine></Large>
          </GroupBody>
          <GroupLabel $pr={4}>View</GroupLabel>
        </Group>
      </Ribbon>

      <FormulaBar>
        <NameBox>[Calcul...<Fx>fx</Fx></NameBox>
        <FormulaText>
          =<Fn>FIRSTNONBLANK</Fn><Paren>(</Paren>
          <Wavy><Fn>FILTER</Fn>(<Fn>VALUES</Fn>(Locations[Locations]),<Fn>SEARCH</Fn>(Locations[Locations],Data_2[Comment (Manual Inputs)],1,0))</Wavy>,1<Paren>)</Paren>
        </FormulaText>
        <FormulaEnd><ChevronsDown size={15} strokeWidth={2.2} /></FormulaEnd>
      </FormulaBar>

      <Workspace>
        <Pane $h={497}>
          <GridArea>
            <Row $h={29}>
              <Corner>
                <svg width="34" height="23" viewBox="0 0 34 23"><path d="M34 0V23H0Z" fill="#c9c9c9" /></svg>
              </Corner>
              <Head $ls={0.2}>Order Location<FilterBtn /></Head>
              <Head $ls={0.62}>Comment (Manual Inputs)<FilterBtn /></Head>
              <Head>Location (Desired)<FilterBtn /></Head>
              <Head $ls={0.7}>Facility (Desired)<FilterBtn /></Head>
              <Head $bg="#d3efe0" $c={GREEN} $line="#d3efe0">Calculated Column 1<FilterBtn /></Head>
              <Head $bg="#9fd4b4" $c="#fff" $line="#9fd4b4" $add>Add Column</Head>
            </Row>
            {rows.map((r, i) => {
              const n = i + 1;
              const edge = edges.has(n);
              return (
                <Row $h={30} key={n}>
                  <RowNum $sel={n === 1}>{n}</RowNum>
                  <Cell $edge={edge} $pl={4}>Primary Care</Cell>
                  <Cell $edge={edge}>{r[0]}</Cell>
                  <Cell $edge={edge}>{r[1]}</Cell>
                  <Cell $edge={edge}>{r[2]}</Cell>
                  <Cell $edge={edge} $calc $selected={n === 1} $pl={4}>{r[3]}</Cell>
                  <Cell $edge={edge} />
                </Row>
              );
            })}
          </GridArea>
          <Tooltip>Order Location:<br />(Select All)</Tooltip>
          <VScroll>
            <Arrow $h={27}><ChevronUp size={17} strokeWidth={3} /></Arrow>
            <Thumb $h={170} />
            <Arrow $h={27} $end><ChevronDown size={17} strokeWidth={3} /></Arrow>
          </VScroll>
        </Pane>
        <Splitter />
        <Pane $h={188}>
          <GridArea>
            {Array.from({ length: 7 }, (_, i) => (
              <Row $h={27} key={i}>
                <RowNum />
                <Cell /><Cell /><Cell /><Cell /><Cell /><Cell />
              </Row>
            ))}
          </GridArea>
          <VScroll>
            <Arrow $h={25}><ChevronUp size={17} strokeWidth={3} /></Arrow>
            <Thumb $h={24} />
            <Arrow $h={26} $end><ChevronDown size={17} strokeWidth={3} /></Arrow>
          </VScroll>
        </Pane>
        <HScroll>
          <HArrow $w={26}><ChevronLeft size={17} strokeWidth={3} /></HArrow>
          <HThumb $ml={772} />
          <HArrow $w={70}><ChevronRight size={17} strokeWidth={3} /></HArrow>
        </HScroll>
        <SheetTabs>
          <SheetTab $w={74} $active>Data 2</SheetTab>
          <SheetTab $w={96}>Locations</SheetTab>
        </SheetTabs>
        <StatusBar>
          Record:
          <NavGlyph $ml={14}><IcoSkip /></NavGlyph>
          <NavGlyph $ml={15}><IcoStep /></NavGlyph>
          <RecordText $ml={67}>1 of 25</RecordText>
          <NavGlyph $ml={67}><IcoStep r /></NavGlyph>
          <NavGlyph $ml={17}><IcoSkip r /></NavGlyph>
          <StatusIcons>
            <StatusView $w={23} $on><IcoStatusGrid /></StatusView>
            <StatusView $w={43}><IcoStatusDiagram /></StatusView>
          </StatusIcons>
        </StatusBar>
      </Workspace>

      <Taskbar>
        <SysSlot><TbWin /></SysSlot>
        <SysSlot><TbSearch /></SysSlot>
        <SysSlot><TbCortana /></SysSlot>
        <SysSlot><TbTaskView /></SysSlot>
        <Apps>
          <AppCell $open><TbEdge /></AppCell>
          <AppCell $open><TbExplorer /></AppCell>
          <AppCell $open><TbOutlook /></AppCell>
          <AppCell $open $active><TbExcel /></AppCell>
          <AppCell><TbWord /></AppCell>
          <AppCell><TbPaint /></AppCell>
          <AppCell><TbNote /></AppCell>
          <AppCell><TbPbi /></AppCell>
          <AppCell $open><TbAcrobat /></AppCell>
        </Apps>
        <Tray>
          <TrayIcon $w={48}><TrayChevron /></TrayIcon>
          <TrayIcon $w={48}><TrayCloud a="#0f6cbd" b="#2e9be6" /></TrayIcon>
          <TrayIcon $w={48}><TrayCloud a="#8e8e8e" b="#e8e8e8" /></TrayIcon>
          <TrayIcon $w={48}><TrayNet /></TrayIcon>
          <TrayIcon $w={48}><TraySound /></TrayIcon>
          <TrayIcon $w={56}><TrayPen /></TrayIcon>
          <TrayText $w={60}>ENG<br />IN</TrayText>
          <TrayText $w={110}>04:46<br />23-02-2021</TrayText>
          <TrayIcon $w={62}><TrayNotify /></TrayIcon>
          <TrayIcon $w={19} />
        </Tray>
      </Taskbar>
    </Screen>
  );
}
